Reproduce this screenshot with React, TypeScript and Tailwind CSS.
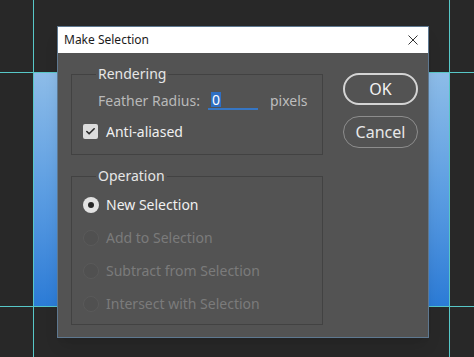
import { Check } from 'lucide-react';

const font = { fontFamily: '"Noto Sans", "Open Sans", sans-serif' };

function Radio({ label, checked, disabled }: { label: string; checked?: boolean; disabled?: boolean }) {
  return (
    <div className="flex items-center h-[33px]">
      {checked ? (
        <span className="flex items-center justify-center w-[16px] h-[16px] rounded-full bg-[#e2e2e2]">
          <span className="w-[6px] h-[6px] rounded-full bg-[#262626]" />
        </span>
      ) : (
        <span className="w-[16px] h-[16px] rounded-full border border-[#5a5a5a] bg-[#505050]" />
      )}
      <span className={disabled ? 'ml-[7px] text-[#7b7b7b]' : 'ml-[7px] text-[#f0f0f0]'}>{label}</span>
    </div>
  );
}

export default function App() {
  return (
    <div className="relative w-[474px] h-[357px] bg-[#282828] overflow-hidden text-[14px] whitespace-nowrap" style={font}>
      {/* canvas image behind the dialog */}
      <div className="absolute left-[34px] top-[73px] w-[415px] h-[233px] bg-gradient-to-b from-[#8dbce8] via-[#5d9ee2] to-[#2b7bd6]" />

      {/* guides */}
      <div className="absolute left-[33px] top-0 w-px h-full bg-[#57c7c7]" />
      <div className="absolute left-[449px] top-0 w-px h-full bg-[#57c7c7]" />
      <div className="absolute top-[72px] left-0 h-px w-full bg-[#57c7c7]" />
      <div className="absolute top-[306px] left-0 h-px w-full bg-[#57c7c7]" />

      {/* dialog */}
      <div className="absolute left-[57px] top-[26px] w-[372px] h-[312px] flex flex-col bg-[#535353] border border-[#5e7890] shadow-lg">
        <div className="flex items-center justify-between h-[26px] bg-white pl-[6px] pr-[10px]">
          <span className="text-[12px] text-[#1b1b1b]">Make Selection</span>
          <svg width="10" height="10" viewBox="0 0 10 10" className="text-[#333]">
            <path d="M0.5 0.5 L9.5 9.5 M9.5 0.5 L0.5 9.5" stroke="currentColor" strokeWidth="1" />
          </svg>
        </div>

        <div className="flex flex-1 pl-[13px] pt-[14px]">
          <div className="flex flex-col w-[252px]">
            <fieldset className="h-[88px] border border-[#424242] pl-[11px]">
              <legend className="ml-[13px] px-[2px] text-[#e6e6e6] leading-[14px]">Rendering</legend>
              <div className="flex items-center h-[26px] mt-[6px] pl-[15px]">
                <span className="text-[#b9b9b9]">Feather Radius:</span>
                <span className="ml-[8px] w-[50px] h-[20px] border-b-2 border-[#3676c4] flex items-center">
                  <span className="ml-[3px] px-[1px] leading-[15px] bg-[#2f6fc3] text-white">0</span>
                </span>
                <span className="ml-[12px] text-[#bdbdbd]">pixels</span>
              </div>
              <div className="flex items-center h-[26px] mt-[5px]">
                <span className="flex items-center justify-center w-[15px] h-[15px] rounded-[2px] bg-[#dcdcdc]">
                  <Check size={11} strokeWidth={3.5} className="text-[#2a2a2a]" />
                </span>
                <span className="ml-[8px] text-[#f0f0f0]">Anti-aliased</span>
              </div>
            </fieldset>

            <fieldset className="mt-[14px] h-[156px] border border-[#424242] pl-[11px]">
              <legend className="ml-[13px] px-[2px] text-[#e6e6e6] leading-[14px]">Operation</legend>
              <div className="flex flex-col mt-[5px]">
                <Radio label="New Selection" checked />
                <Radio label="Add to Selection" disabled />
                <Radio label="Subtract from Selection" disabled />
                <Radio label="Intersect with Selection" disabled />
              </div>
            </fieldset>
          </div>

          <div className="flex flex-col gap-[11px] ml-[20px] mt-[6px]">
            <button className="w-[75px] h-[32px] rounded-full border-2 border-[#d4d4d4] text-[16px] text-[#f2f2f2]">OK</button>
            <button className="w-[75px] h-[32px] rounded-full border-[1.5px] border-[#8d8d8d] text-[16px] text-[#e8e8e8]">Cancel</button>
          </div>
        </div>
      </div>
    </div>
  );
}
